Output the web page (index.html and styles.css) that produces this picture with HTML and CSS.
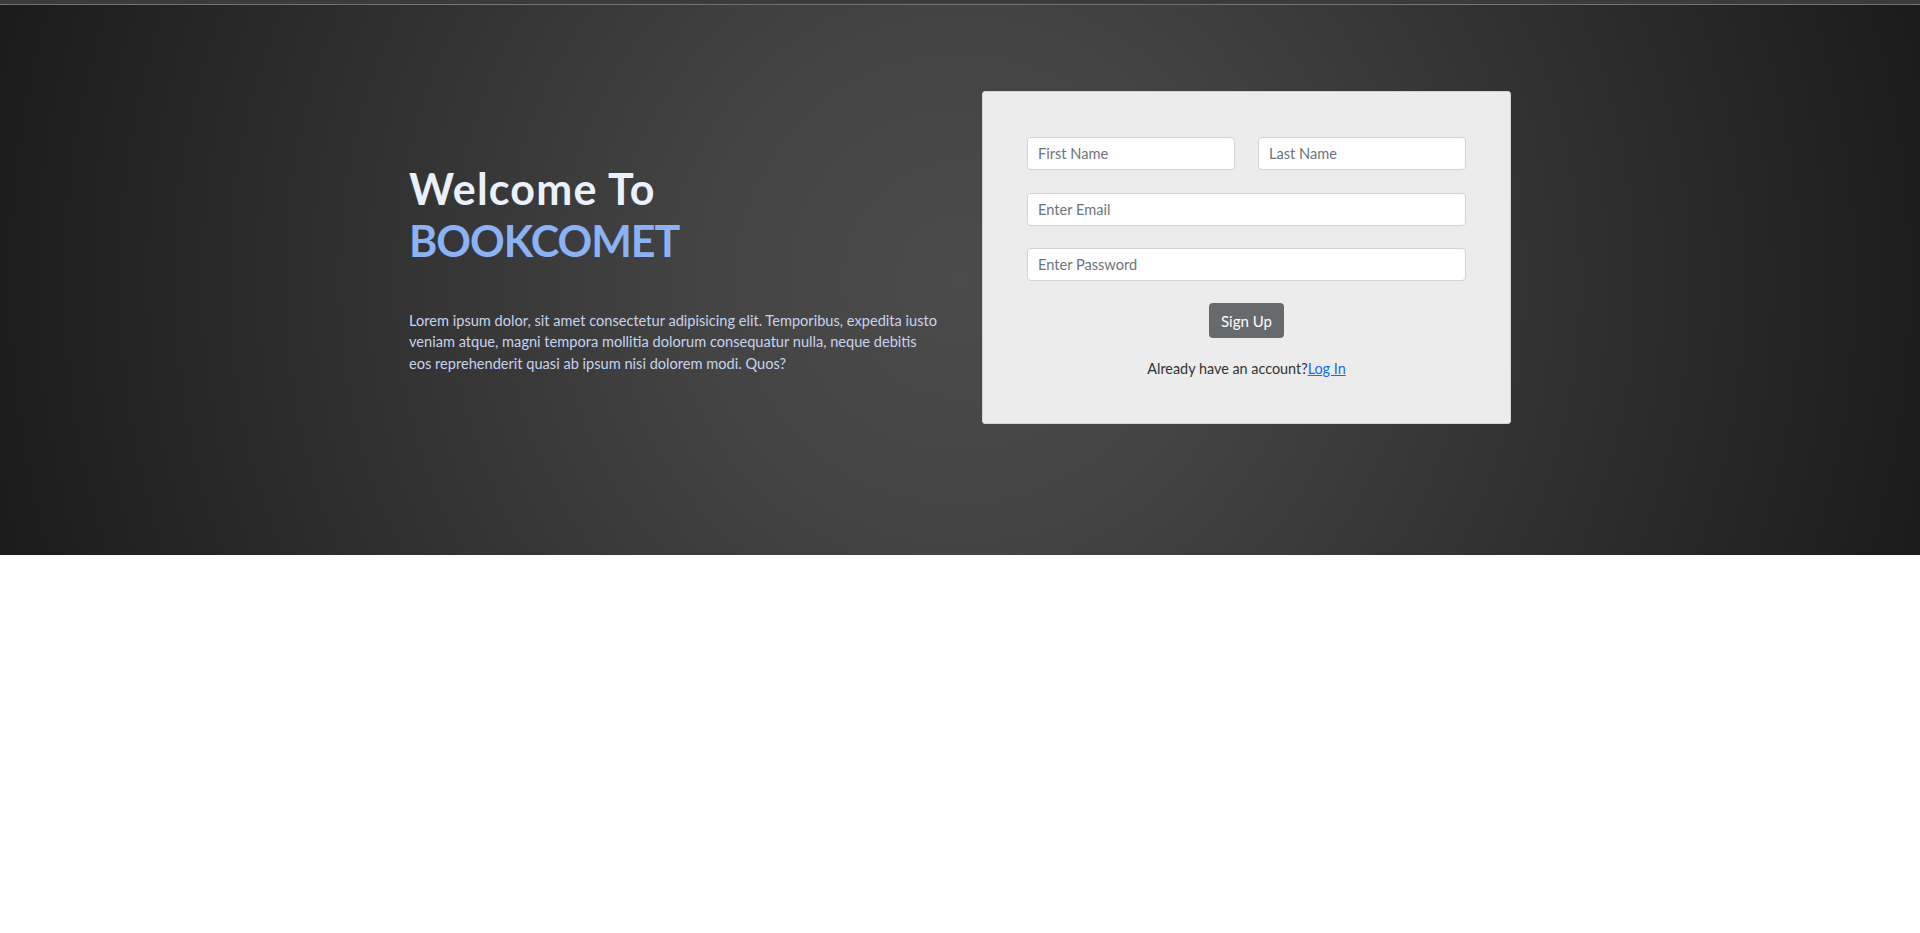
FILE: index.html
```html
<!DOCTYPE html>
<html lang="en">
<head>
<meta charset="utf-8">
<title>BookComet - Sign Up</title>
<link rel="stylesheet" href="styles.css">
</head>
<body>
<div class="topbar"></div>
<section class="hero">
  <div class="hero-inner">
    <div class="intro">
      <h1 class="title">Welcome To<br><span class="brand">BOOKCOMET</span></h1>
      <p class="lead">Lorem ipsum dolor, sit amet consectetur adipisicing elit. Temporibus, expedita iusto veniam atque, magni tempora mollitia dolorum consequatur nulla, neque debitis eos reprehenderit quasi ab ipsum nisi dolorem modi. Quos?</p>
    </div>
    <form class="card">
      <div class="row-two">
        <input class="field" type="text" placeholder="First Name">
        <input class="field" type="text" placeholder="Last Name">
      </div>
      <input class="field field-wide" type="email" placeholder="Enter Email">
      <input class="field field-wide" type="password" placeholder="Enter Password">
      <div class="actions">
        <button class="btn" type="button">Sign Up</button>
      </div>
      <p class="switch">Already have an account?<a href="#" class="link">Log In</a></p>
    </form>
  </div>
</section>
</body>
</html>
```
FILE: styles.css
```css
* { box-sizing: border-box; }

html, body {
  margin: 0;
  padding: 0;
  background: #ffffff;
  font-family: Lato, "Open Sans", "Noto Sans", sans-serif;
}

.topbar {
  height: 5px;
  background: #3b3b3b;
  border-bottom: 1px solid #747474;
}

.hero {
  height: 550px;
  background: radial-gradient(circle farthest-corner at 50% 50%, #4b4b4b 0%, #444444 25%, #1b1b1b 100%);
}

.hero-inner {
  display: flex;
  align-items: flex-start;
  padding-top: 86px;
  margin-left: calc(50% - 551px);
}

.intro {
  width: 540px;
  margin-top: 72px;
  margin-right: 33px;
}

.title {
  margin: 0;
  font-size: 43px;
  line-height: 52px;
  font-weight: 700;
  letter-spacing: 1.2px;
  color: #ebf0fd;
}

.brand {
  letter-spacing: -1px;
  color: #8ab2f4;
}

.lead {
  width: 530px;
  margin: 43px 0 0;
  font-size: 14.6px;
  line-height: 21.3px;
  color: #c8d3f0;
}

.card {
  width: 529px;
  padding: 45px 44px 44px 44px;
  background: #ececec;
  border: 1px solid #d2d2d2;
  border-radius: 3px;
  display: flex;
  flex-direction: column;
}

.row-two {
  display: flex;
  gap: 23px;
  margin-bottom: 23px;
}

.row-two .field {
  flex: 1 1 0;
  min-width: 0;
}

.field {
  height: 33px;
  padding: 0 10px;
  border: 1px solid #ced4da;
  border-radius: 4px;
  background: #ffffff;
  font-family: inherit;
  font-size: 14.6px;
  color: #212529;
  outline: none;
}

.field::placeholder {
  color: #6c757d;
}

.field-wide {
  width: 100%;
  margin-bottom: 22px;
}

.actions {
  display: flex;
  justify-content: center;
}

.btn {
  height: 35px;
  padding: 0 12px;
  border: none;
  border-radius: 4px;
  background: #676a6d;
  color: #ffffff;
  font-family: inherit;
  font-size: 15px;
  cursor: pointer;
}

.switch {
  margin: 20px 0 0;
  text-align: center;
  font-size: 14.4px;
  line-height: 21px;
  color: #333333;
}

.link {
  color: #0d6efd;
  text-decoration: underline;
}
```
